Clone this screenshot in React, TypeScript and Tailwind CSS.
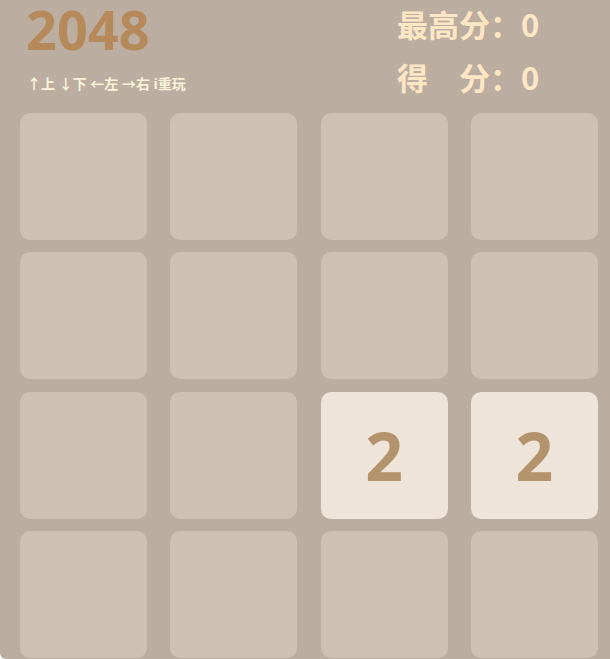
import React from "react";

const board: number[][] = [
  [0, 0, 0, 0],
  [0, 0, 0, 0],
  [0, 0, 2, 2],
  [0, 0, 0, 0],
];

const font = { fontFamily: '"Open Sans", "Noto Sans CJK SC", sans-serif' };

function Tile({ value }: { value: number }) {
  if (!value) {
    return <div className="h-[127px] w-[127px] rounded-[10px] bg-[#cdc1b4]" />;
  }
  return (
    <div className="flex h-[127px] w-[127px] items-center justify-center rounded-[10px] bg-[#eee4da] text-[66px] font-bold leading-none text-[#b3936b]">
      {value}
    </div>
  );
}

export default function App() {
  return (
    <div
      className="h-[659px] w-[610px] overflow-hidden rounded-bl-[6px] bg-[#bbada0]"
      style={font}
    >
      <div className="flex h-[113px]">
        <div className="w-[397px] pl-[26px]">
          <div className="h-[58px] text-[54px] font-bold leading-[58px] text-[#b5895a]">
            2048
          </div>
          <div className="mt-[16px] pl-[1px] text-[14px] font-bold leading-[20px] text-[#f7f3d6]">
            ↑上 ↓下 ←左 →右 i重玩
          </div>
        </div>
        <div
          className="-mt-[3px] text-[31px] font-bold leading-[53px] text-[#fde6c4]"
          style={{ fontFamily: '"Noto Sans CJK SC", sans-serif' }}
        >
          <div>最高分：0</div>
          <div>得　分：0</div>
        </div>
      </div>
      <div className="grid grid-cols-[repeat(4,127px)] gap-x-[23.33px] gap-y-[12.33px] pl-[20px]">
        {board.flat().map((v, i) => (
          <Tile key={i} value={v} />
        ))}
      </div>
    </div>
  );
}
